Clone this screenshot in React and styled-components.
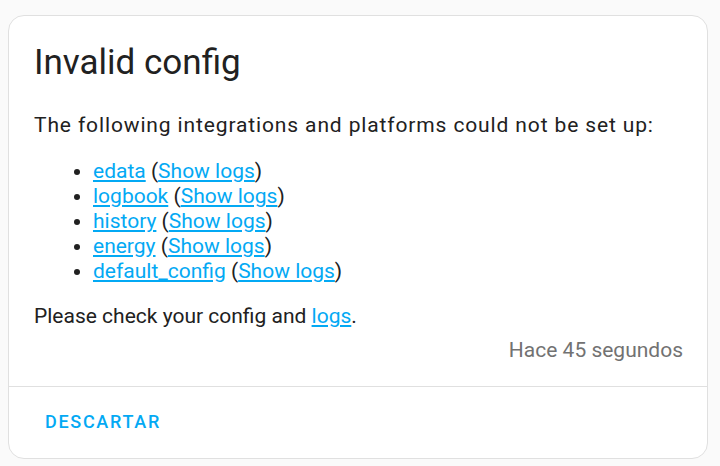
import React from 'react';
import styled, { createGlobalStyle } from 'styled-components';

const GlobalStyle = createGlobalStyle`
  html, body {
    margin: 0;
    background: #fafafa;
  }
  body {
    padding: 15px 12px 8px 8px;
    font-family: Roboto, "Noto Sans", sans-serif;
  }
`;

const Card = styled.div`
  background: #fff;
  border: 1px solid #e0e0e0;
  border-radius: 16px;
  width: 698px;
  color: #212121;
`;

const Header = styled.h1`
  margin: 0;
  padding: 25px 24px 0 25px;
  font-size: 35px;
  font-weight: 400;
  line-height: 44px;
`;

const Content = styled.div`
  padding: 28px 24px 0 25px;
  font-size: 21px;
  line-height: 25px;
`;

const Para = styled.p`
  margin: 0;
  letter-spacing: ${p => p.$spread || 0}px;
`;

const List = styled.ul`
  margin: 21px 0 20px;
  padding-left: 59px;
`;

const Link = styled.a`
  color: #03a9f4;
  text-decoration: underline;
`;

const Time = styled.div`
  text-align: right;
  color: #727272;
  padding: 9px 0 23px;
`;

const Actions = styled.div`
  border-top: 1px solid #e0e0e0;
  padding: 18px 12px 20px;
`;

const Button = styled.button`
  background: none;
  border: none;
  font-family: Roboto, sans-serif;
  font-size: 18px;
  font-weight: 500;
  letter-spacing: 1.7px;
  color: #03a9f4;
  text-transform: uppercase;
  padding: 6px 24px;
  cursor: pointer;
`;

const items = ['edata', 'logbook', 'history', 'energy', 'default_config'];

export default function App() {
  return (
    <>
      <GlobalStyle />
      <Card>
        <Header>Invalid config</Header>
        <Content>
          <Para $spread={0.87}>The following integrations and platforms could not be set up:</Para>
          <List>
            {items.map(name => (
              <li key={name}>
                <Link href="#">{name}</Link> (<Link href="#">Show logs</Link>)
              </li>
            ))}
          </List>
          <Para>
            Please check your config and <Link href="#">logs</Link>.
          </Para>
          <Time>Hace 45 segundos</Time>
        </Content>
        <Actions>
          <Button>Descartar</Button>
        </Actions>
      </Card>
    </>
  );
}
